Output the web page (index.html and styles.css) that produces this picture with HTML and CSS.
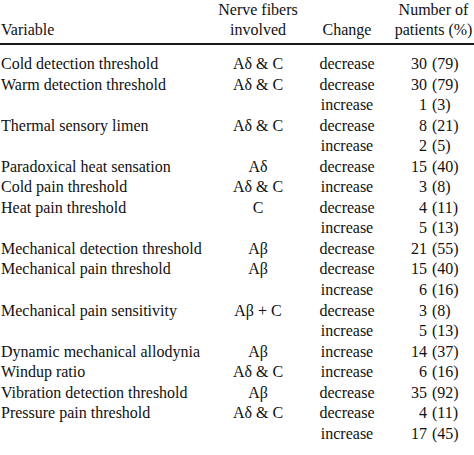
FILE: index.html
```html
<!DOCTYPE html>
<html>
<head>
<meta charset="utf-8">
<link rel="stylesheet" href="styles.css">
</head>
<body>
<table class="qst">
  <colgroup>
    <col class="c-var"><col class="c-fib"><col class="c-chg"><col class="c-num">
  </colgroup>
  <thead>
    <tr>
      <th class="h-var">Variable</th>
      <th class="h-mid">Nerve fibers<br>involved</th>
      <th class="h-mid h-bot">Change</th>
      <th class="h-mid">Number of<br>patients (%)</th>
    </tr>
  </thead>
  <tbody>
    <tr><td>Cold detection threshold</td><td class="fib">Aδ &amp; C</td><td class="chg">decrease</td><td class="num"><span class="n">30</span> (79)</td></tr>
    <tr><td>Warm detection threshold</td><td class="fib">Aδ &amp; C</td><td class="chg">decrease</td><td class="num"><span class="n">30</span> (79)</td></tr>
    <tr><td></td><td class="fib"></td><td class="chg">increase</td><td class="num"><span class="n">1</span> (3)</td></tr>
    <tr><td>Thermal sensory limen</td><td class="fib">Aδ &amp; C</td><td class="chg">decrease</td><td class="num"><span class="n">8</span> (21)</td></tr>
    <tr><td></td><td class="fib"></td><td class="chg">increase</td><td class="num"><span class="n">2</span> (5)</td></tr>
    <tr><td>Paradoxical heat sensation</td><td class="fib">Aδ</td><td class="chg">decrease</td><td class="num"><span class="n">15</span> (40)</td></tr>
    <tr><td>Cold pain threshold</td><td class="fib">Aδ &amp; C</td><td class="chg">increase</td><td class="num"><span class="n">3</span> (8)</td></tr>
    <tr><td>Heat pain threshold</td><td class="fib">C</td><td class="chg">decrease</td><td class="num"><span class="n">4</span> (11)</td></tr>
    <tr><td></td><td class="fib"></td><td class="chg">increase</td><td class="num"><span class="n">5</span> (13)</td></tr>
    <tr><td>Mechanical detection threshold</td><td class="fib">Aβ</td><td class="chg">decrease</td><td class="num"><span class="n">21</span> (55)</td></tr>
    <tr><td>Mechanical pain threshold</td><td class="fib">Aβ</td><td class="chg">decrease</td><td class="num"><span class="n">15</span> (40)</td></tr>
    <tr><td></td><td class="fib"></td><td class="chg">increase</td><td class="num"><span class="n">6</span> (16)</td></tr>
    <tr><td>Mechanical pain sensitivity</td><td class="fib">Aβ + C</td><td class="chg">decrease</td><td class="num"><span class="n">3</span> (8)</td></tr>
    <tr><td></td><td class="fib"></td><td class="chg">increase</td><td class="num"><span class="n">5</span> (13)</td></tr>
    <tr><td>Dynamic mechanical allodynia</td><td class="fib">Aβ</td><td class="chg">increase</td><td class="num"><span class="n">14</span> (37)</td></tr>
    <tr><td>Windup ratio</td><td class="fib">Aδ &amp; C</td><td class="chg">increase</td><td class="num"><span class="n">6</span> (16)</td></tr>
    <tr><td>Vibration detection threshold</td><td class="fib">Aβ</td><td class="chg">decrease</td><td class="num"><span class="n">35</span> (92)</td></tr>
    <tr><td>Pressure pain threshold</td><td class="fib">Aδ &amp; C</td><td class="chg">decrease</td><td class="num"><span class="n">4</span> (11)</td></tr>
    <tr><td></td><td class="fib"></td><td class="chg">increase</td><td class="num"><span class="n">17</span> (45)</td></tr>
  </tbody>
</table>
</body>
</html>
```

FILE: styles.css
```css
html, body {
  margin: 0;
  padding: 0;
  background: #ffffff;
}

.qst {
  width: 474px;
  border-collapse: collapse;
  table-layout: fixed;
  font-family: "Liberation Serif", "Times New Roman", serif;
  font-size: 16px;
  color: #111111;
}

.c-var { width: 215px; }
.c-fib { width: 86px; }
.c-chg { width: 92px; }
.c-num { width: 81px; }

.qst th {
  font-weight: normal;
  line-height: 20px;
  padding: 0 0 3px 0;
  border-bottom: 2px solid #1a1a1a;
  vertical-align: bottom;
}

.h-var {
  text-align: left;
  padding-left: 1px !important;
}

.h-mid {
  text-align: center;
}

.qst td {
  padding: 0;
  line-height: 20.55px;
  height: 20.55px;
  white-space: nowrap;
}

.qst td:first-child {
  padding-left: 1px;
}

.qst tbody tr:first-child td {
  padding-top: 9px;
}

.fib, .chg {
  text-align: center;
}

.num {
  text-align: left;
}

.n {
  display: inline-block;
  width: 34px;
  margin-right: 1px;
  text-align: right;
}
```
